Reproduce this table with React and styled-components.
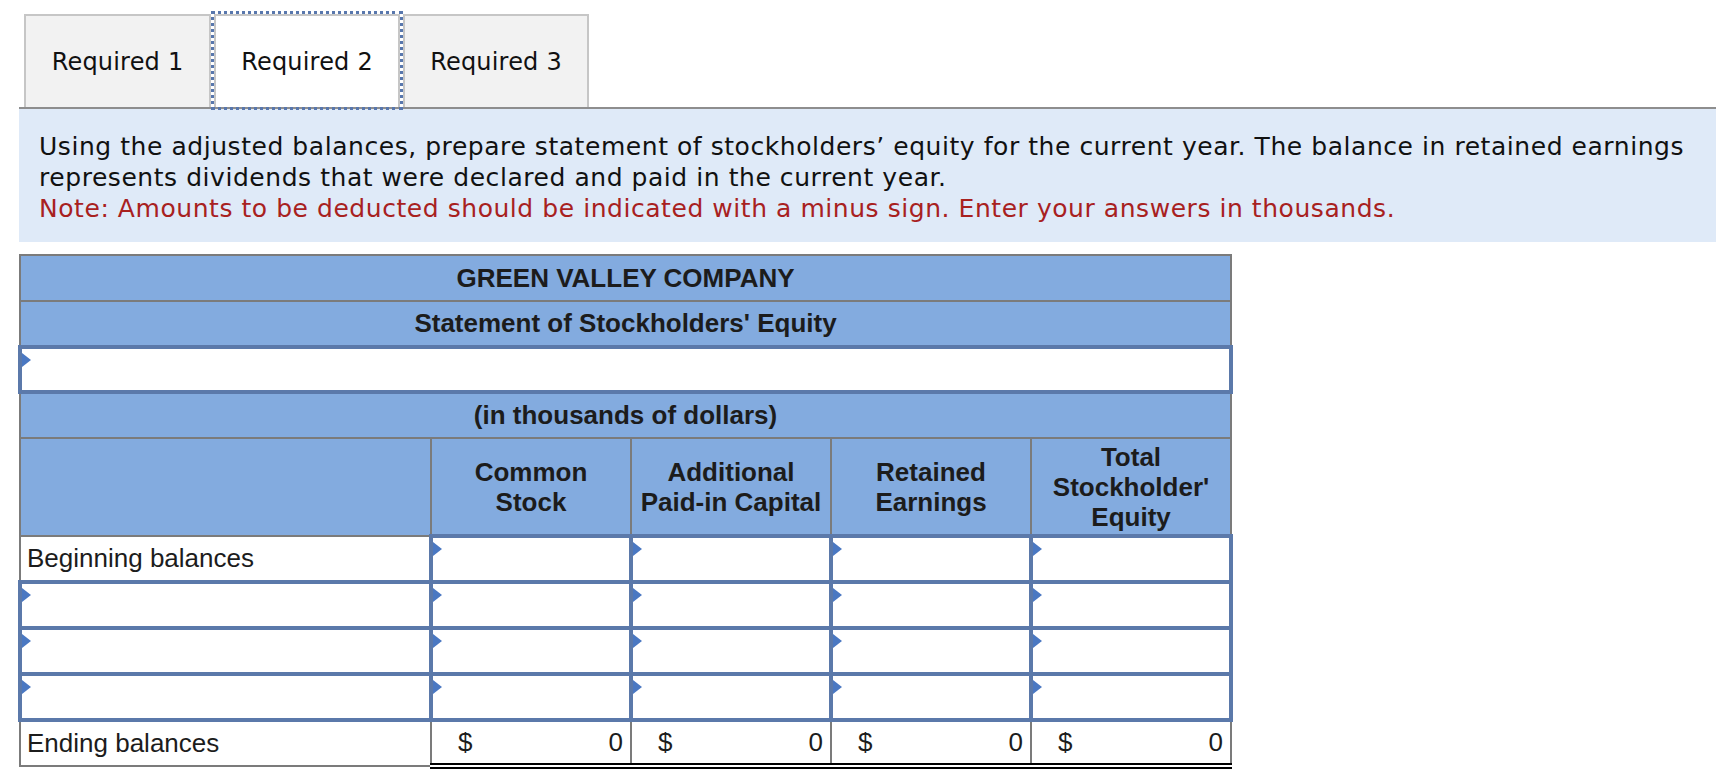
import React from 'react';
import styled, { createGlobalStyle } from 'styled-components';

const GlobalStyle = createGlobalStyle`
  html, body {
    margin: 0;
    padding: 0;
    background: #ffffff;
  }
`;

const Page = styled.div`
  padding: 14px 0 0 19px;
  font-family: "DejaVu Sans", Verdana, sans-serif;
`;

const TabStrip = styled.div`
  display: flex;
  padding-left: 5px;
  border-bottom: 2px solid #8e8e8e;
`;

const Tab = styled.div`
  display: flex;
  align-items: center;
  justify-content: center;
  box-sizing: border-box;
  width: ${(p) => p.$width}px;
  height: 93px;
  font-size: 24px;
  letter-spacing: 0.2px;
  color: #111;
  background: ${(p) => (p.$active ? '#ffffff' : '#f2f2f2')};
  border: 2px solid #c6c6c6;
  border-bottom: none;
  margin-right: ${(p) => (p.$active ? '3px' : '0')};
  margin-left: ${(p) => (p.$active ? '3px' : '0')};
  outline: ${(p) => (p.$active ? '3px dotted #5877ad' : 'none')};
  outline-offset: 0;
`;

const Instructions = styled.div`
  background: #dfeaf8;
  padding: 22px 20px 18px 20px;
  font-size: 25px;
  letter-spacing: 0.55px;
  line-height: 31px;
  color: #111;
`;

const Note = styled.div`
  color: #a8211f;
`;

const TableWrap = styled.div`
  margin: 12px 0 0 -1px;
`;

const Table = styled.table`
  border-collapse: collapse;
  table-layout: fixed;
  width: 1211px;
  font-family: "Liberation Sans", Arial, sans-serif;
  font-size: 26px;
  color: #1c1c1c;
`;

const Row = styled.tr`
  height: ${(p) => p.$h || 46}px;
`;

const BandCell = styled.td`
  background: #83abdf;
  border: 2px solid #7b7b7b;
  padding: 0;
  text-align: center;
  font-weight: bold;
`;

const HeadCell = styled.td`
  background: #83abdf;
  border: 2px solid #7b7b7b;
  padding: 0 4px;
  text-align: center;
  vertical-align: middle;
  font-weight: bold;
  line-height: 30px;
`;

const LabelCell = styled.td`
  background: #ffffff;
  border: 2px solid #7b7b7b;
  padding: 0 6px;
`;

const InputCell = styled.td`
  position: relative;
  background: #ffffff;
  border: 4px solid #5b79aa;
  padding: 0;

  &::before {
    content: '';
    position: absolute;
    left: 0;
    top: 4px;
    width: 0;
    height: 0;
    border-top: 7px solid transparent;
    border-bottom: 7px solid transparent;
    border-left: 9px solid #4a78c2;
  }
`;

const TotalCell = styled.td`
  background: #ffffff;
  border-left: 2px solid #7b7b7b;
  border-right: 2px solid #7b7b7b;
  border-top: 3px solid #000000;
  border-bottom: 6px double #000000;
  padding: 0 7px 0 26px;
`;

const Amount = styled.div`
  display: flex;
  justify-content: space-between;
  align-items: center;
`;

const columns = [
  ['Common', 'Stock'],
  ['Additional', 'Paid-in Capital'],
  ['Retained', 'Earnings'],
  ['Total', "Stockholder'", 'Equity'],
];

const App = () => {
  return (
    <>
      <GlobalStyle />
      <Page>
        <TabStrip>
          <Tab $width={187}>Required 1</Tab>
          <Tab $width={186} $active>Required 2</Tab>
          <Tab $width={186}>Required 3</Tab>
        </TabStrip>
        <Instructions>
          <div>
            Using the adjusted balances, prepare statement of stockholders’ equity for the current year. The balance in retained earnings
            represents dividends that were declared and paid in the current year.
          </div>
          <Note>Note: Amounts to be deducted should be indicated with a minus sign. Enter your answers in thousands.</Note>
        </Instructions>
        <TableWrap>
          <Table>
            <colgroup>
              <col style={{ width: 411 }} />
              <col style={{ width: 200 }} />
              <col style={{ width: 200 }} />
              <col style={{ width: 200 }} />
              <col style={{ width: 200 }} />
            </colgroup>
            <tbody>
              <Row>
                <BandCell colSpan={5}>GREEN VALLEY COMPANY</BandCell>
              </Row>
              <Row>
                <BandCell colSpan={5}>Statement of Stockholders' Equity</BandCell>
              </Row>
              <Row $h={45}>
                <InputCell colSpan={5} />
              </Row>
              <Row>
                <BandCell colSpan={5}>(in thousands of dollars)</BandCell>
              </Row>
              <Row $h={98}>
                <HeadCell />
                {columns.map((lines, i) => (
                  <HeadCell key={i}>
                    {lines.map((l, j) => (
                      <div key={j}>{l}</div>
                    ))}
                  </HeadCell>
                ))}
              </Row>
              <Row>
                <LabelCell>Beginning balances</LabelCell>
                {columns.map((_, i) => (
                  <InputCell key={i} />
                ))}
              </Row>
              {[0, 1, 2].map((r) => (
                <Row key={r}>
                  <InputCell />
                  {columns.map((_, i) => (
                    <InputCell key={i} />
                  ))}
                </Row>
              ))}
              <Row>
                <LabelCell>Ending balances</LabelCell>
                {columns.map((_, i) => (
                  <TotalCell key={i}>
                    <Amount>
                      <span>$</span>
                      <span>0</span>
                    </Amount>
                  </TotalCell>
                ))}
              </Row>
            </tbody>
          </Table>
        </TableWrap>
      </Page>
    </>
  );
};

export default App;
